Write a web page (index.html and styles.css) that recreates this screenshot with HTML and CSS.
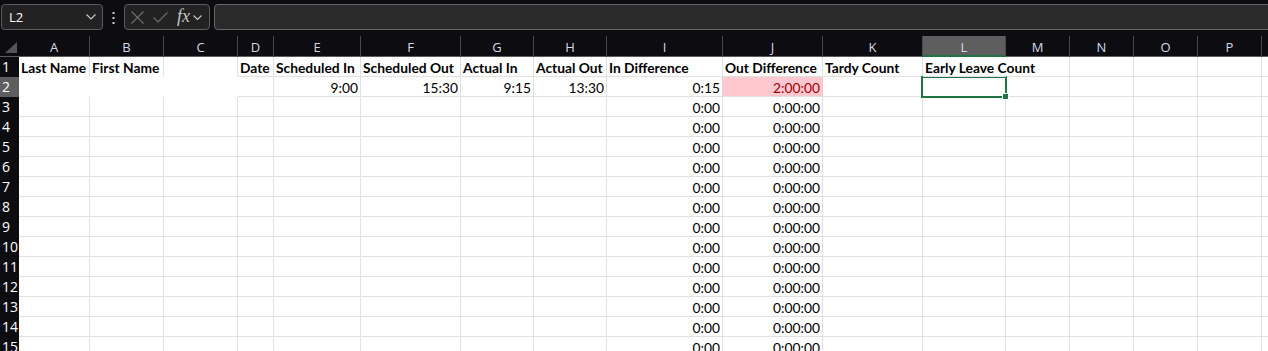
FILE: index.html
```html
<!DOCTYPE html>
<html lang="en">
<head>
    <meta charset="UTF-8">
    <title>Attendance Sheet</title>
    <link rel="stylesheet" href="styles.css">
</head>
<body>
    <div class="formula-bar">
        <div class="name-box">
            <span>L2</span>
            <svg width="10" height="6" viewBox="0 0 10 6"><polyline points="0.5,0.5 5,5 9.5,0.5" fill="none" stroke="#c8c8c8" stroke-width="1.2"/></svg>
        </div>
        <div class="bar-dots">
            <svg width="3" height="12" viewBox="0 0 3 12"><rect x="0.5" y="0" width="2" height="2" fill="#d0d0d0"/><rect x="0.5" y="5" width="2" height="2" fill="#d0d0d0"/><rect x="0.5" y="10" width="2" height="2" fill="#d0d0d0"/></svg>
        </div>
        <div class="fx-box">
            <svg class="fx-cancel" width="13" height="13" viewBox="0 0 13 13"><path d="M0.5 0.5 L12.5 12.5 M12.5 0.5 L0.5 12.5" stroke="#6f6f6f" stroke-width="1.1" fill="none"/></svg>
            <svg class="fx-enter" width="15" height="11" viewBox="0 0 15 11"><polyline points="0.5,5.5 5,10 14.5,0.5" stroke="#6f6f6f" stroke-width="1.1" fill="none"/></svg>
            <span class="fx-label">fx</span>
            <svg width="9" height="5" viewBox="0 0 9 5"><polyline points="0.5,0.5 4.5,4.5 8.5,0.5" fill="none" stroke="#c8c8c8" stroke-width="1.1"/></svg>
        </div>
        <div class="formula-input"></div>
    </div>

    <div class="sheet" id="sheet"></div>

    <script>
        const columns = 'ABCDEFGHIJKLMNOPQ'.split('');
        const data = {
            1: { A: 'Last Name', B: 'First Name', D: 'Date', E: 'Scheduled In', F: 'Scheduled Out', G: 'Actual In', H: 'Actual Out', I: 'In Difference', J: 'Out Difference', K: 'Tardy Count', L: 'Early Leave Count' },
            2: { E: '9:00', F: '15:30', G: '9:15', H: '13:30', I: '0:15', J: '2:00:00' }
        };
        for (let r = 3; r <= 15; r++) {
            data[r] = { I: '0:00', J: '0:00:00' };
        }

        const sheet = document.getElementById('sheet');

        // Column header row
        const corner = document.createElement('div');
        corner.className = 'corner';
        corner.innerHTML = '<span class="corner-mark"></span>';
        sheet.appendChild(corner);
        columns.forEach(col => {
            const head = document.createElement('div');
            head.className = 'col-head' + (col === 'L' ? ' active' : '');
            head.textContent = col;
            sheet.appendChild(head);
        });

        // Rows
        for (let r = 1; r <= 15; r++) {
            const rowHead = document.createElement('div');
            rowHead.className = 'row-head' + (r === 2 ? ' active' : '');
            rowHead.textContent = r;
            sheet.appendChild(rowHead);

            columns.forEach(col => {
                const cell = document.createElement('div');
                const classes = ['cell', r === 1 ? 'bold' : 'num'];
                const blankCol = 'ABC'.includes(col);
                if (r === 1 && blankCol) classes.push('no-bottom');
                if (r === 2 && blankCol) classes.push('blank');
                if (r === 1 && col === 'L') classes.push('spill');
                if (r === 2 && col === 'I') classes.push('before-alert');
                if (r === 2 && col === 'J') classes.push('alert');
                if (r === 2 && col === 'L') classes.push('selected');
                cell.className = classes.join(' ');
                cell.textContent = data[r][col] || '';
                if (r === 2 && col === 'L') {
                    cell.innerHTML = '<span class="fill-handle"></span>';
                }
                sheet.appendChild(cell);
            });
        }
    </script>
</body>
</html>
```

FILE: styles.css
```css
* {
    margin: 0;
    padding: 0;
    box-sizing: border-box;
}

body {
    background: #0d0c11;
    font-family: 'Lato', sans-serif;
    width: 1268px;
    height: 351px;
    overflow: hidden;
}

/* Formula bar */
.formula-bar {
    height: 36px;
    display: flex;
    align-items: flex-start;
    padding: 4px 0 0 1px;
}

.name-box {
    width: 102px;
    height: 26px;
    border: 1px solid #5c5c5c;
    border-radius: 4px;
    background: #222222;
    display: flex;
    align-items: center;
    justify-content: space-between;
    padding: 0 6px 0 7px;
    color: #ffffff;
    font-family: 'Open Sans', sans-serif;
    font-size: 13px;
}

.bar-dots {
    width: 21px;
    height: 26px;
    display: flex;
    align-items: center;
    justify-content: center;
    padding-top: 1px;
}

.fx-box {
    width: 86px;
    height: 26px;
    border: 1px solid #5c5c5c;
    border-radius: 4px;
    background: #222222;
    display: flex;
    align-items: center;
    padding: 0 0 0 6px;
}

.fx-cancel {
    margin-right: 9px;
}

.fx-enter {
    margin-right: 9px;
}

.fx-label {
    font-family: 'Liberation Serif', serif;
    font-style: italic;
    font-size: 18px;
    color: #c4c4c4;
    margin-right: 3px;
    line-height: 1;
    padding-bottom: 2px;
}

.formula-input {
    flex: 1;
    height: 26px;
    margin-left: 4px;
    margin-right: -10px;
    border: 1px solid #666666;
    border-radius: 4px;
    background: #2a2a2a;
}

/* Grid */
.sheet {
    display: grid;
    width: max-content;
    grid-template-columns: 19px 71px 74px 74px 36px 87px 100px 73px 73px 116px 100px 100px 83px 64px 64px 64px 64px 64px;
    grid-template-rows: 21px;
    grid-auto-rows: 20px;
}

.corner {
    background: #0d0c11;
    border-bottom: 1px solid #5b5b5b;
    display: flex;
    align-items: flex-end;
    justify-content: flex-end;
    padding: 0 2px 3px 0;
}

.corner-mark {
    width: 12px;
    height: 11px;
    background: #555555;
    clip-path: polygon(100% 0, 100% 100%, 0 100%);
}

.col-head {
    background: #0d0c11;
    border-right: 1px solid #4a4a4a;
    border-bottom: 1px solid #5b5b5b;
    color: #d3dbe6;
    font-family: 'Open Sans', sans-serif;
    font-size: 13px;
    line-height: 21px;
    text-align: center;
    padding-top: 1px;
}

.col-head.active {
    background: #5e5e5e;
    border-bottom: 2px solid #217346;
}

.row-head {
    background: #0d0c11;
    color: #ffffff;
    font-family: 'Open Sans', sans-serif;
    font-size: 14px;
    line-height: 20px;
    padding-left: 2px;
}

.row-head.active {
    background: #5e5e5e;
}

.cell {
    background: #ffffff;
    border-right: 1px solid #e1e1e1;
    border-bottom: 1px solid #e1e1e1;
    color: #000000;
    font-size: 13.8px;
    line-height: 21px;
    padding: 0 2px;
    white-space: nowrap;
}

.cell.bold {
    font-weight: 700;
}

.cell.num {
    text-align: right;
}

.cell.no-bottom {
    border-bottom-color: #ffffff;
}

.cell.blank {
    border-right-color: #ffffff;
    border-bottom-color: #ffffff;
}

/* text that runs on into the empty cell to its right */
.cell.spill {
    border-right-color: #ffffff;
    z-index: 1;
}

.cell.before-alert {
    border-right-color: #ffc7ce;
}

.cell.alert {
    background: #ffc7ce;
    border-right-color: #ffc7ce;
    color: #9c0006;
}

.cell.selected {
    position: relative;
}

.cell.selected::after {
    content: '';
    position: absolute;
    left: -2px;
    top: -1px;
    right: -2px;
    bottom: -2px;
    border: 2px solid #217346;
}

.fill-handle {
    position: absolute;
    right: -4px;
    bottom: -4px;
    width: 7px;
    height: 7px;
    background: #217346;
    border: 1px solid #ffffff;
    z-index: 1;
}
```
